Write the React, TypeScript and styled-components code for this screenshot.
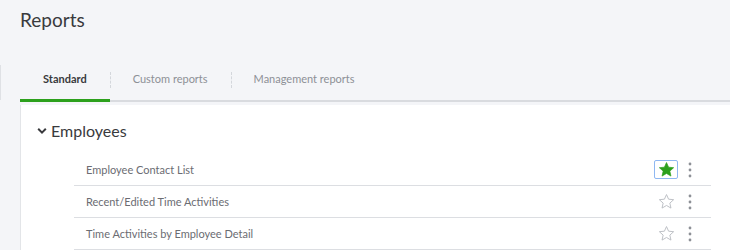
import React, { useState } from 'react'
import styled, { createGlobalStyle } from 'styled-components'

const GlobalStyle = createGlobalStyle`
  body {
    margin: 0;
    background: #f4f5f8;
    font-family: Lato, "Open Sans", sans-serif;
    color: #393a3d;
  }
`

const tabs = ['Standard', 'Custom reports', 'Management reports']

const reports = [
  { name: 'Employee Contact List', favorite: true },
  { name: 'Recent/Edited Time Activities', favorite: false },
  { name: 'Time Activities by Employee Detail', favorite: false },
]

const Star: React.FC<{ filled: boolean }> = ({ filled }) => (
  <svg width="17" height="17" viewBox="0 0 24 24">
    <path
      d="M12 2.2l2.95 6.55 7.15.7-5.4 4.8 1.6 7.05L12 17.6l-6.3 3.7 1.6-7.05-5.4-4.8 7.15-.7z"
      fill={filled ? '#2ca01c' : 'none'}
      stroke={filled ? '#2ca01c' : '#b8bbc1'}
      strokeWidth={filled ? 1 : 1.3}
      strokeLinejoin="round"
    />
  </svg>
)

const Dots: React.FC = () => (
  <svg width="4" height="16" viewBox="0 0 4 16">
    <circle cx="2" cy="2" r="1.4" fill="#8d9096" />
    <circle cx="2" cy="8" r="1.4" fill="#8d9096" />
    <circle cx="2" cy="14" r="1.4" fill="#8d9096" />
  </svg>
)

const App: React.FC = () => {
  const [active, setActive] = useState(0)
  const [favorites, setFavorites] = useState(reports.map(r => r.favorite))

  const toggle = (i: number) => {
    setFavorites(f => f.map((v, j) => (j === i ? !v : v)))
  }

  return (
    <Page>
      <GlobalStyle />
      <Title>Reports</Title>
      <TabRow>
        <Gutter />
        <TabBar>
          {tabs.map((t, i) => (
            <Tab key={t} active={i === active} first={i === 0} onClick={() => setActive(i)}>
              {t}
            </Tab>
          ))}
        </TabBar>
      </TabRow>
      <Card>
        <SectionHeader>
          <svg width="10" height="8" viewBox="0 0 10 8">
            <path d="M1.2 1.8L5 5.6l3.8-3.8" fill="none" stroke="#393a3d" strokeWidth="2" />
          </svg>
          <span>Employees</span>
        </SectionHeader>
        <List>
          {reports.map((r, i) => (
            <Row key={r.name}>
              <RowLabel>{r.name}</RowLabel>
              <StarButton selected={i === 0} onClick={() => toggle(i)}>
                <Star filled={favorites[i]} />
              </StarButton>
              <MoreButton>
                <Dots />
              </MoreButton>
            </Row>
          ))}
        </List>
      </Card>
    </Page>
  )
}

const Page = styled.div`
  width: 730px;
  height: 250px;
  overflow: hidden;
  padding-top: 8px;
  box-sizing: border-box;
`

const Title = styled.h1`
  margin: 0 0 0 20px;
  font-size: 19px;
  line-height: 24px;
  font-weight: 400;
  color: #393a3d;
`

const TabRow = styled.div`
  display: flex;
  margin-top: 24px;
`

const Gutter = styled.div`
  width: 20px;
  height: 35px;
  margin-top: 9px;
  box-sizing: border-box;
  border-left: 1px solid #dfe1e5;
`

const TabBar = styled.div`
  flex: 1;
  display: flex;
  height: 44px;
  border-bottom: 2px solid #d9dbdf;
`

interface TabProps {
  active: boolean
  first: boolean
}
const Tab = styled.div<TabProps>`
  position: relative;
  display: flex;
  align-items: center;
  padding: 0 23px;
  font-size: 11px;
  font-weight: ${props => (props.active ? 700 : 400)};
  color: ${props => (props.active ? '#393a3d' : '#8d9096')};
  cursor: pointer;
  &:before {
    content: "";
    display: ${props => (props.first ? 'none' : 'block')};
    position: absolute;
    left: 0;
    top: 16px;
    height: 16px;
    border-left: 1px dashed #d4d7dc;
  }
  &:after {
    content: "";
    display: ${props => (props.active ? 'block' : 'none')};
    position: absolute;
    left: 0;
    right: 0;
    bottom: -2px;
    height: 3px;
    background: #2ca01c;
  }
`

const Card = styled.div`
  margin: 3px 0 0 20px;
  height: 200px;
  background: #fff;
  border-left: 1px solid #e3e5e8;
`

const SectionHeader = styled.div`
  display: flex;
  align-items: center;
  gap: 4px;
  padding: 16px 0 0 16px;
  font-size: 16px;
  line-height: 20px;
  color: #393a3d;
`

const List = styled.div`
  margin: 13px 19px 0 53px;
`

const Row = styled.div`
  display: flex;
  align-items: center;
  height: 31px;
  padding: 0 15px 0 12px;
  border-bottom: 1px solid #dcdee2;
`

const RowLabel = styled.div`
  flex: 1;
  font-size: 11px;
  color: #6b6c72;
`

interface StarButtonProps {
  selected: boolean
}
const StarButton = styled.div<StarButtonProps>`
  display: flex;
  align-items: center;
  justify-content: center;
  width: 24px;
  height: 19px;
  box-sizing: border-box;
  border: 1.5px solid ${props => (props.selected ? '#8fb8f2' : 'transparent')};
  border-radius: 2px;
  cursor: pointer;
`

const MoreButton = styled.div`
  display: flex;
  align-items: center;
  justify-content: center;
  width: 12px;
  margin-left: 6px;
`

export default App
